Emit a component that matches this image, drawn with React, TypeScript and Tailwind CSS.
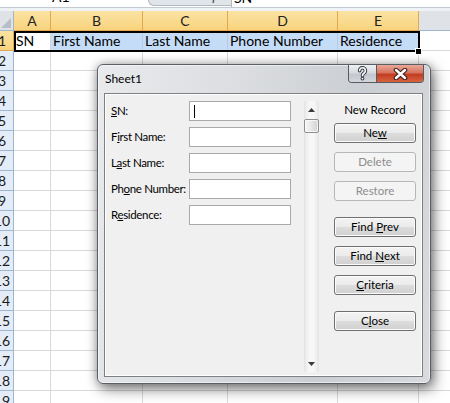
import React from "react";

const colW = ["w-[37px]", "w-[92px]", "w-[85px]", "w-[110px]", "w-[81px]"];
const colL = ["A", "B", "C", "D", "E"];
const row1 = ["SN", "First Name", "Last Name", "Phone Number", "Residence"];

function RowHeader({ n, sel }: { n: number; sel?: boolean }) {
  return (
    <div
      className={
        "w-[14px] shrink-0 overflow-hidden border-r border-b flex items-center " +
        (sel
          ? "bg-[linear-gradient(#fbe3a3,#f8d37d)] border-[#e2a850]"
          : "bg-[#e4ecf7] border-[#9eb6ce]")
      }
    >
      <div className="-ml-[11px] w-[26px] shrink-0 text-center text-[14px] leading-[18px] text-[#1b1b1b]">
        {n}
      </div>
    </div>
  );
}

function Btn({
  children,
  disabled,
  className = "",
}: {
  children: React.ReactNode;
  disabled?: boolean;
  className?: string;
}) {
  return (
    <div
      className={
        "h-[20px] w-[82px] rounded-[3px] border flex items-center justify-center text-[11.5px] leading-[14px] " +
        (disabled
          ? "border-[#b4b8bb] bg-[#f4f4f4] text-[#8d8d8d] "
          : "border-[#707070] bg-[linear-gradient(#f3f3f3_0%,#ebebeb_50%,#dddddd_50%,#d0d0d0_100%)] text-black shadow-[inset_0_0_0_1px_#fbfbfb] ") +
        className
      }
    >
      {children}
    </div>
  );
}

function Field({ label, cursor }: { label: React.ReactNode; cursor?: boolean }) {
  return (
    <div className="flex h-[20px] items-center">
      <div className="w-[78px] shrink-0 text-[11.5px] leading-[14px] tracking-[-0.35px] text-black whitespace-nowrap">
        {label}
      </div>
      <div className="h-[20px] w-[102px] border border-[#a9a9a9] bg-white flex items-center pl-[4px]">
        {cursor && <div className="h-[13px] w-px bg-black" />}
      </div>
    </div>
  );
}

function Tri({ down }: { down?: boolean }) {
  return (
    <svg width="7" height="4" viewBox="0 0 7 4">
      <polygon points={down ? "0,0 7,0 3.5,4" : "0,4 3.5,0 7,4"} fill="#3a3a3a" />
    </svg>
  );
}

export default function App() {
  const rows = Array.from({ length: 19 }, (_, i) => i + 1);
  return (
    <div className="relative h-[403px] w-[450px] overflow-hidden bg-white font-['Lato',sans-serif]">
      {/* formula bar remnant */}
      <div className="flex h-[8px] overflow-hidden border-b border-[#c4cad2] bg-white">
        <div className="w-[148px] shrink-0 overflow-hidden pl-[52px]">
          <div className="-mt-[12px] text-[14px] leading-[17px] text-black">A1</div>
        </div>
        <div className="flex h-[6px] w-[83px] shrink-0 justify-end overflow-hidden rounded-bl-[10px] border-b border-l border-[#b3b9c1] bg-[#e1e5ea] pr-[8px]">
          <span className="-mt-[13px] font-['Liberation_Serif',serif] text-[15px] italic leading-[17px] text-[#444]">
            fx
          </span>
        </div>
        <div className="flex-1 overflow-hidden border-l border-[#b3b9c1] pl-[2px]">
          <div className="-mt-[11px] text-[14px] leading-[17px] text-black">SN</div>
        </div>
      </div>
      <div className="h-[3px] bg-[#eef1f5]" />

      {/* column headers */}
      <div className="flex h-[20px]">
        <div className="relative w-[14px] shrink-0 border-r border-b border-[#9eb6ce] bg-[#dfe3e8]">
          <svg className="absolute bottom-[2px] right-[2px]" width="10" height="10" viewBox="0 0 10 10">
            <polygon points="10,0 10,10 0,10" fill="#b7bec7" />
          </svg>
        </div>
        {colL.map((c, i) => (
          <div
            key={c}
            className={
              colW[i] +
              " shrink-0 border-r border-b border-[#e2a850] bg-[linear-gradient(#fbe3a3,#f8d37d)] text-center text-[14px] leading-[19px] text-[#222]"
            }
          >
            {c}
          </div>
        ))}
        <div className="flex-1 border-b border-[#9eb6ce] bg-[#dfe3e8]" />
      </div>

      {/* rows */}
      {rows.map((n) => (
        <div key={n} className="flex h-[20px]">
          <RowHeader n={n} sel={n === 1} />
          {colW.map((w, i) => (
            <div
              key={i}
              className={
                w +
                " shrink-0 border-r border-b overflow-hidden whitespace-nowrap pl-[2px] text-[14px] leading-[19px] text-black " +
                (n === 1
                  ? i === 0
                    ? "bg-white border-[#d4d4d4]"
                    : "bg-[#c5dcf6] border-[#b2cbe8]"
                  : "border-[#d9d9d9]")
              }
            >
              {n === 1 ? row1[i] : ""}
            </div>
          ))}
          <div className="flex-1 border-b border-[#d9d9d9]" />
        </div>
      ))}

      {/* selection outline + fill handle */}
      <div className="pointer-events-none absolute left-[14px] top-[31px] h-[21px] w-[406px] border-2 border-black" />
      <div className="absolute left-[415px] top-[48px] h-[7px] w-[7px] border border-white bg-black" />

      {/* dialog */}
      <div className="absolute left-[97px] top-[64px] flex h-[320px] w-[334px] flex-col rounded-[6px] border border-[#5a5f66] bg-[linear-gradient(100deg,#e9eaec_0%,#dcdee1_35%,#cbced2_70%,#d9dbde_100%)] shadow-[inset_0_0_0_1px_rgba(255,255,255,0.55),3px_5px_14px_rgba(0,0,0,0.5),0_0_8px_rgba(0,0,0,0.25)]">
        {/* title bar */}
        <div className="flex h-[28px] shrink-0 items-start justify-between pl-[7px] pr-[6px]">
          <span className="mt-[6px] text-[12px] leading-[16px] text-black">Sheet1</span>
          <div className="flex h-[18px] overflow-hidden rounded-b-[4px] border border-t-0 border-[#565b62]">
            <div className="flex w-[28px] items-center justify-center border-r border-[#565b62] bg-[linear-gradient(#eef0f2_0%,#d7dbe0_45%,#c3c8ce_55%,#d3d7dc_100%)]">
              <svg width="11" height="15" viewBox="0 0 11 15">
                <path
                  d="M2.6 4.6 A2.9 2.9 0 1 1 7.2 7 C6 7.8 5.5 8.3 5.5 9.6"
                  fill="none"
                  stroke="#3d3f42"
                  strokeWidth="3.6"
                  strokeLinecap="round"
                />
                <circle cx="5.5" cy="12.6" r="1.9" fill="#3d3f42" />
                <path
                  d="M2.6 4.6 A2.9 2.9 0 1 1 7.2 7 C6 7.8 5.5 8.3 5.5 9.6"
                  fill="none"
                  stroke="#ffffff"
                  strokeWidth="1.6"
                  strokeLinecap="round"
                />
                <circle cx="5.5" cy="12.6" r="0.9" fill="#ffffff" />
              </svg>
            </div>
            <div className="flex w-[46px] items-center justify-center bg-[linear-gradient(#e9a796_0%,#d67561_45%,#c23c22_55%,#d9633f_100%)]">
              <svg width="15" height="12" viewBox="0 0 15 12">
                <path d="M3 2 L12 10 M12 2 L3 10" stroke="#3b2320" strokeWidth="4.6" strokeLinecap="round" />
                <path d="M3 2 L12 10 M12 2 L3 10" stroke="#ffffff" strokeWidth="2.4" strokeLinecap="round" />
              </svg>
            </div>
          </div>
        </div>

        {/* client area */}
        <div className="mb-[6px] ml-[6px] mr-[7px] flex flex-1 items-start border border-[#7d8186] bg-[#f0f0f0] shadow-[inset_0_0_0_1px_#ffffff]">
          <div className="flex w-[199px] shrink-0 flex-col gap-[6px] pl-[6px] pt-[7px]">
            <Field label={<><u>S</u>N:</>} cursor />
            <Field label={<>F<u>i</u>rst Name:</>} />
            <Field label={<>L<u>a</u>st Name:</>} />
            <Field label={<>Ph<u>o</u>ne Number:</>} />
            <Field label={<>R<u>e</u>sidence:</>} />
          </div>

          {/* scrollbar */}
          <div className="mt-[7px] flex h-[271px] w-[15px] shrink-0 flex-col border-x border-[#e4e4e4] bg-[linear-gradient(90deg,#eaeaea,#f7f7f7_35%,#f7f7f7_65%,#eaeaea)]">
            <div className="flex h-[17px] shrink-0 items-center justify-center">
              <Tri />
            </div>
            <div className="mt-[1px] h-[14px] shrink-0 -mx-px rounded-[2px] border border-[#8e8f8f] bg-[linear-gradient(90deg,#f6f6f6,#e6e6e6_50%,#d2d2d2)] shadow-[inset_0_0_0_1px_rgba(255,255,255,0.7)]" />
            <div className="flex-1" />
            <div className="flex h-[17px] shrink-0 items-center justify-center">
              <Tri down />
            </div>
          </div>

          {/* buttons */}
          <div className="ml-[15px] flex w-[82px] shrink-0 flex-col pt-[8px]">
            <div className="h-[15px] text-center text-[11.5px] leading-[15px] text-black">New Record</div>
            <Btn className="mt-[6px]">
              Ne<u>w</u>
            </Btn>
            <Btn disabled className="mt-[9px]">
              Delete
            </Btn>
            <Btn disabled className="mt-[9px]">
              Restore
            </Btn>
            <Btn className="mt-[16px]">
              Find&nbsp;<u>P</u>rev
            </Btn>
            <Btn className="mt-[9px]">
              Find&nbsp;<u>N</u>ext
            </Btn>
            <Btn className="mt-[9px]">
              <u>C</u>riteria
            </Btn>
            <Btn className="mt-[16px]">
              C<u>l</u>ose
            </Btn>
          </div>
        </div>
      </div>
    </div>
  );
}
